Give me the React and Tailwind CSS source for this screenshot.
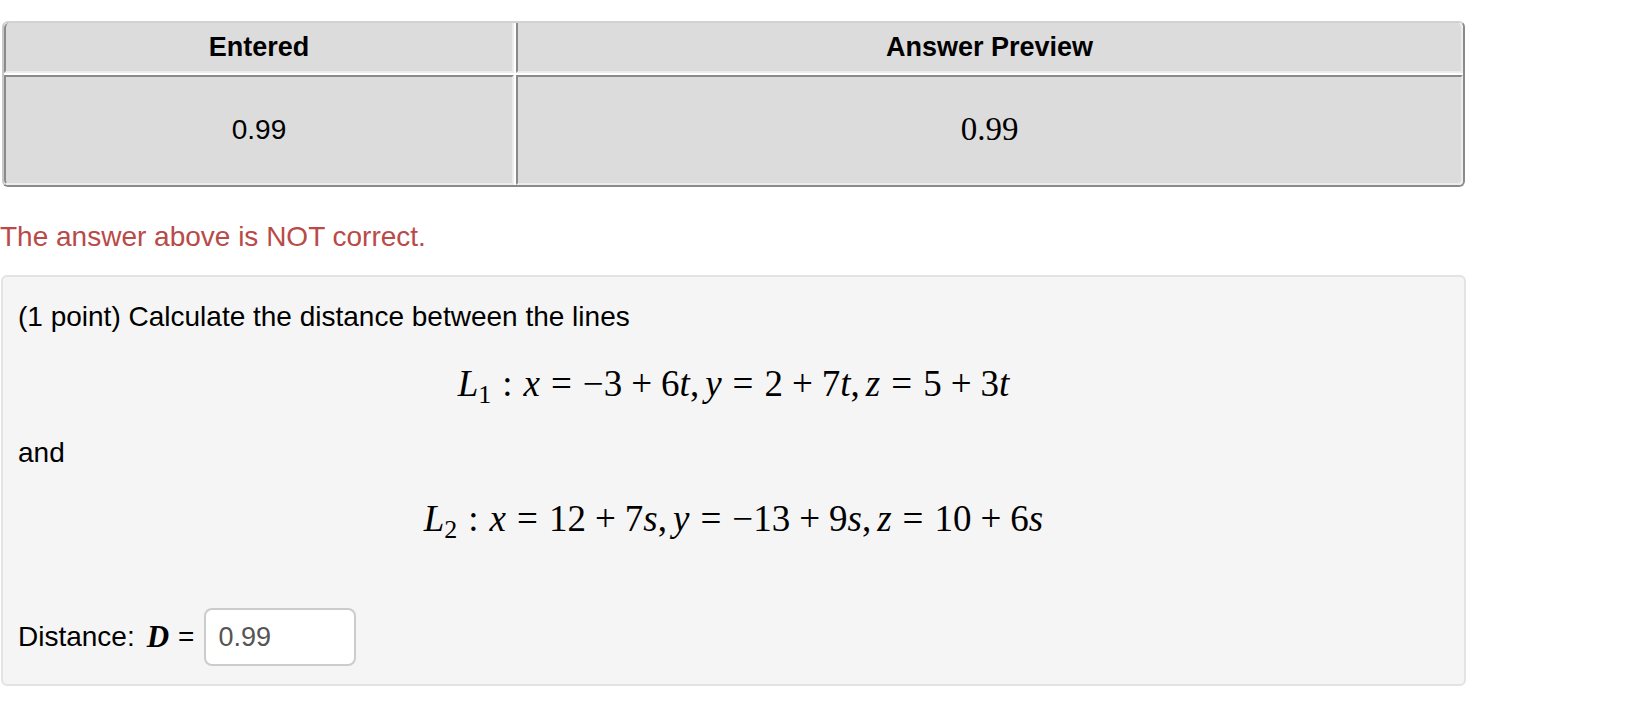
import React from 'react';

const sans = { fontFamily: '"Liberation Sans", Arial, sans-serif' };

// small helpers for the typeset math lines
const V = ({ children }) => <span className="italic">{children}</span>;
const Rel = ({ children }) => <span className="mx-[11px]">{children}</span>;
const Bin = ({ children }) => <span className="mx-[9px]">{children}</span>;
const Comma = () => <span className="mr-[6px]">,</span>;
const Sub = ({ children }) => <span className="text-[26px] align-[-7px]">{children}</span>;

function MathLine({ children }) {
  return (
    <div className="flex justify-center h-[50px] items-center">
      <div className="font-['Liberation_Serif',serif] text-[37px] leading-[50px] whitespace-nowrap text-black">
        {children}
      </div>
    </div>
  );
}

export default function App() {
  return (
    <div className="min-h-screen bg-white text-black font-['Liberation_Sans',Arial,sans-serif]" style={sans}>
      {/* results table */}
      <div className="ml-[2px] mt-[21px] w-[1463px] border-2 border-t-[#d2d2d2] border-l-[#c8c8c8] border-r-[#8a8a8a] border-b-[#8a8a8a] rounded-[6px] bg-white">
        <div className="grid grid-cols-[510px_1fr] gap-[2px]">
          <div className="h-[50px] flex items-center justify-center bg-[#dcdcdc] border-l-2 border-l-[#8a8a8a] border-b-2 border-b-[#ececec] border-r-2 border-r-[#ececec] rounded-tl-[5px] text-[27px] font-bold">
            Entered
          </div>
          <div className="h-[50px] flex items-center justify-center bg-[#dcdcdc] border-l-2 border-l-[#8a8a8a] border-b-2 border-b-[#ececec] border-r-2 border-r-[#ececec] rounded-tr-[5px] text-[27px] font-bold">
            Answer Preview
          </div>
          <div className="h-[110px] flex items-center justify-center bg-[#dcdcdc] border-2 border-t-[#8a8a8a] border-l-[#8a8a8a] border-b-[#ececec] border-r-[#ececec] rounded-bl-[5px] text-[28px]">
            0.99
          </div>
          <div className="h-[110px] flex items-center justify-center bg-[#dcdcdc] border-2 border-t-[#8a8a8a] border-l-[#8a8a8a] border-b-[#ececec] border-r-[#ececec] rounded-br-[5px] text-[33px] font-['Liberation_Serif',serif]">
            0.99
          </div>
        </div>
      </div>

      {/* feedback */}
      <div className="mt-[30px] text-[28px] leading-[40px] text-[#b94a48]">
        The answer above is NOT correct.
      </div>

      {/* problem well */}
      <div className="mt-[18px] ml-[1px] w-[1465px] bg-[#f5f5f5] border-2 border-[#e3e3e3] rounded-[6px] px-[15px] pt-[20px] pb-[18px] text-[28px] leading-[40px]">
        <div>(1 point) Calculate the distance between the lines</div>

        <div className="mt-[27px]">
          <MathLine>
            <V>L</V><Sub>1</Sub>
            <Rel>:</Rel>
            <V>x</V><Rel>=</Rel>−3<Bin>+</Bin>6<V>t</V><Comma />
            <V>y</V><Rel>=</Rel>2<Bin>+</Bin>7<V>t</V><Comma />
            <V>z</V><Rel>=</Rel>5<Bin>+</Bin>3<V>t</V>
          </MathLine>
        </div>

        <div className="mt-[19px]">and</div>

        <div className="mt-[26px]">
          <MathLine>
            <V>L</V><Sub>2</Sub>
            <Rel>:</Rel>
            <V>x</V><Rel>=</Rel>12<Bin>+</Bin>7<V>s</V><Comma />
            <V>y</V><Rel>=</Rel>−13<Bin>+</Bin>9<V>s</V><Comma />
            <V>z</V><Rel>=</Rel>10<Bin>+</Bin>6<V>s</V>
          </MathLine>
        </div>

        <div className="mt-[59px] flex items-center">
          <span>Distance:</span>
          <span className="ml-[12px] font-['Liberation_Serif',serif] italic font-bold text-[31px]">D</span>
          <span className="ml-[9px]">=</span>
          <div className="ml-[10px] w-[152px] h-[58px] bg-white border-2 border-[#cccccc] rounded-[8px] flex items-center pl-[12px] text-[#555555] text-[27px]">
            0.99
          </div>
        </div>
      </div>
    </div>
  );
}
